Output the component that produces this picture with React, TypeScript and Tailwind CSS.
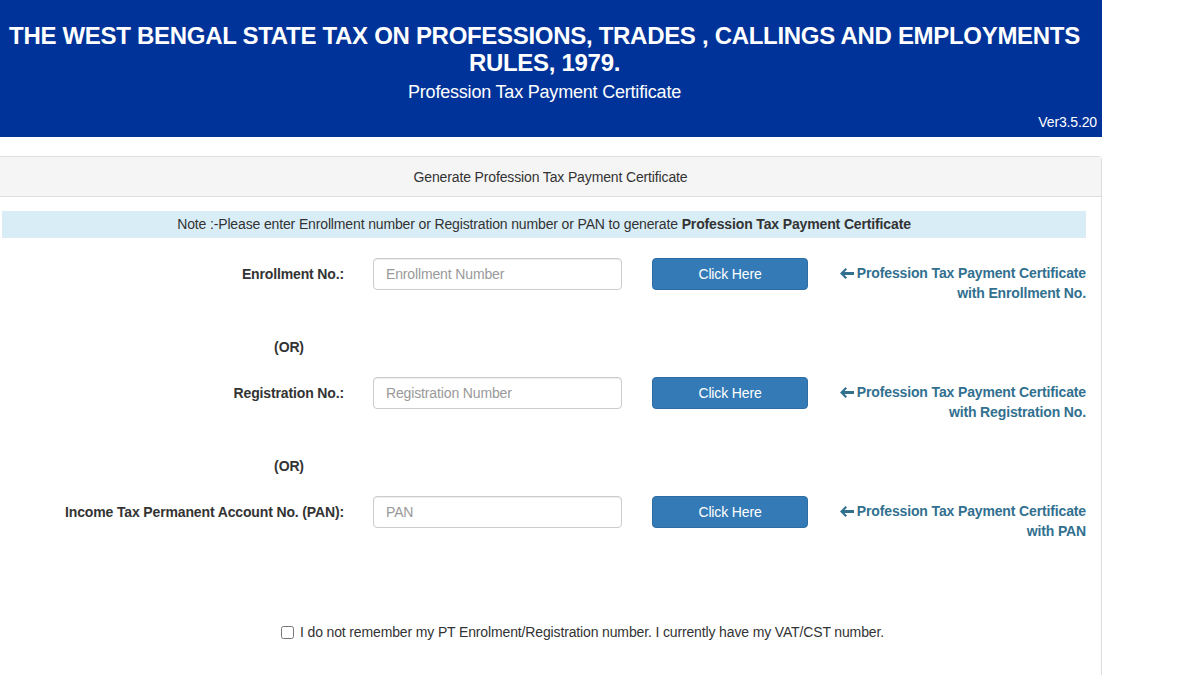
import React from 'react';

const rows = [
    { label: 'Enrollment No.:', placeholder: 'Enrollment Number', link: 'with Enrollment No.' },
    { label: 'Registration No.:', placeholder: 'Registration Number', link: 'with Registration No.' },
    { label: 'Income Tax Permanent Account No. (PAN):', placeholder: 'PAN', link: 'with PAN' },
];

function ArrowLeftGlyph() {
    return (
        <svg width="14" height="11" viewBox="0 0 14 11" className="inline-block mr-[3px] -mt-[2px] align-middle" fill="#31708f">
            <path d="M0 5.5 L5.5 0 L7 1.5 L4.5 4 L14 4 L14 7 L4.5 7 L7 9.5 L5.5 11 Z" />
        </svg>
    );
}

function FormRow({ label, placeholder, link }: { label: string; placeholder: string; link: string }) {
    return (
        <div className="flex items-start h-[32px]">
            <label className="w-[342px] shrink-0 text-right font-bold text-[14px] leading-[32px] text-[#333]">{label}</label>
            <input
                type="text"
                placeholder={placeholder}
                className="ml-[29px] w-[249px] h-[32px] shrink-0 border border-[#ccc] rounded-[4px] px-[12px] text-[14px] text-[#555] placeholder:text-[#999] shadow-[inset_0_1px_1px_rgba(0,0,0,0.075)] outline-none"
            />
            <button className="ml-[30px] w-[156px] h-[32px] shrink-0 bg-[#337ab7] border border-[#2e6da4] rounded-[4px] text-white text-[14px]">
                Click Here
            </button>
            <div className="flex-1 text-right font-bold text-[14px] leading-[19.5px] text-[#31708f] pt-[6px]">
                <div>
                    <ArrowLeftGlyph />
                    Profession Tax Payment Certificate
                </div>
                <div>{link}</div>
            </div>
        </div>
    );
}

export default function App() {
    return (
        <div className="min-h-[675px] bg-white tracking-[-0.14px]" style={{ fontFamily: '"Liberation Sans", Arial, sans-serif' }}>
            <div className="w-[1102px]">
                {/* Header */}
                <div className="bg-[#003399] text-white text-center pt-[22px] pb-[5px] pr-[5px]">
                    <h3 className="font-bold text-[24px] leading-[27px] tracking-[-0.3px] pr-[8px]">
                        THE WEST BENGAL STATE TAX ON PROFESSIONS, TRADES , CALLINGS AND EMPLOYMENTS RULES, 1979.
                    </h3>
                    <h4 className="mt-[6px] text-[18px] leading-[20px] tracking-[-0.2px] pr-[8px]">Profession Tax Payment Certificate</h4>
                    <div className="mt-[10px] text-right text-[14px] leading-[20px]">Ver3.5.20</div>
                </div>

                {/* Panel */}
                <div className="mt-[19px] border border-l-0 border-b-0 border-[#ddd] rounded-tr-[4px] min-h-[519px]">
                    <div className="bg-[#f5f5f5] border-b border-[#ddd] h-[40px] text-center text-[14px] leading-[40px] text-[#333]">
                        Generate Profession Tax Payment Certificate
                    </div>
                    <div className="pl-[2px] pr-[15px] pt-[14px]">
                        <div className="bg-[#d9edf7] h-[27px] text-center text-[14px] leading-[27px] text-[#333]">
                            Note :-Please enter Enrollment number or Registration number or PAN to generate{' '}
                            <b>Profession Tax Payment Certificate</b>
                        </div>

                        <div className="mt-[20px]">
                            {rows.map((r, i) => (
                                <div key={r.label}>
                                    <FormRow {...r} />
                                    {i < rows.length - 1 && (
                                        <div className="mt-[47px] mb-[20px] w-[574px] text-center font-bold text-[14px] leading-[20px] text-[#333]">
                                            (OR)
                                        </div>
                                    )}
                                </div>
                            ))}
                        </div>

                        <div className="mt-[94px] ml-[279px] flex items-center gap-[6px] text-[14px] leading-[20px] text-[#333]">
                            <input type="checkbox" className="w-[13px] h-[13px] m-0" />
                            <span>I do not remember my PT Enrolment/Registration number. I currently have my VAT/CST number.</span>
                        </div>
                    </div>
                </div>
            </div>
        </div>
    );
}
